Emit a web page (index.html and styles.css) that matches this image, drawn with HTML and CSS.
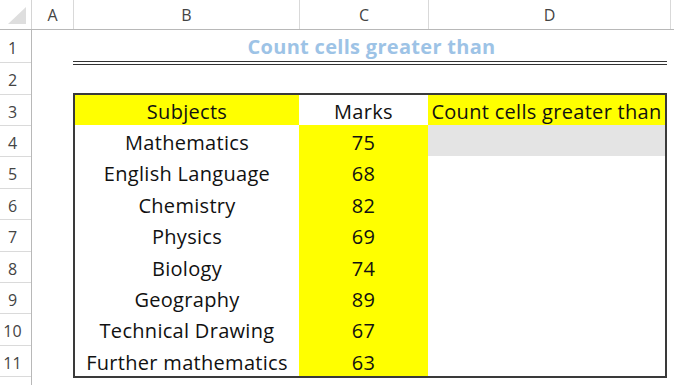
FILE: index.html
```html
<!DOCTYPE html>
<html>
<head>
<meta charset="utf-8">
<link rel="stylesheet" href="styles.css">
</head>
<body>
<div class="sheet">
  <div class="colhdr">
    <div class="corner">
      <svg width="31" height="29" viewBox="0 0 31 29"><polygon points="26,7 26,24 8,24" fill="#dedede"/></svg>
    </div>
    <div class="ch ch-a">A</div>
    <div class="ch ch-b">B</div>
    <div class="ch ch-c">C</div>
    <div class="ch ch-d">D</div>
    <div class="ch ch-e"></div>
  </div>
  <div class="body">
    <div class="rowhdr">
      <div class="rh h33">1</div>
      <div class="rh h32">2</div>
      <div class="rh h31">3</div>
      <div class="rh h31">4</div>
      <div class="rh h32">5</div>
      <div class="rh h31">6</div>
      <div class="rh h32">7</div>
      <div class="rh h31">8</div>
      <div class="rh h31">9</div>
      <div class="rh h32">10</div>
      <div class="rh h31">11</div>
      <div class="rh h31"></div>
    </div>
    <div class="col-a"></div>
    <div class="main">
      <div class="title">Count cells greater than</div>
      <div class="dbl"></div>
      <div class="spacer"></div>
      <div class="table">
        <div class="cell yellow">Subjects</div>
        <div class="cell">Marks</div>
        <div class="cell yellow">Count cells greater than</div>

        <div class="cell">Mathematics</div>
        <div class="cell yellow">75</div>
        <div class="cell gray"></div>

        <div class="cell">English Language</div>
        <div class="cell yellow">68</div>
        <div class="cell"></div>

        <div class="cell">Chemistry</div>
        <div class="cell yellow">82</div>
        <div class="cell"></div>

        <div class="cell">Physics</div>
        <div class="cell yellow">69</div>
        <div class="cell"></div>

        <div class="cell">Biology</div>
        <div class="cell yellow">74</div>
        <div class="cell"></div>

        <div class="cell">Geography</div>
        <div class="cell yellow">89</div>
        <div class="cell"></div>

        <div class="cell">Technical Drawing</div>
        <div class="cell yellow">67</div>
        <div class="cell"></div>

        <div class="cell">Further mathematics</div>
        <div class="cell yellow">63</div>
        <div class="cell"></div>
      </div>
    </div>
  </div>
</div>
</body>
</html>
```

FILE: styles.css
```css
* { box-sizing: border-box; }
html, body {
  margin: 0;
  padding: 0;
  background: #ffffff;
  overflow: hidden;
}
body {
  width: 674px;
  height: 385px;
  font-family: "Open Sans", "Liberation Sans", sans-serif;
  color: #111;
}
.sheet {
  display: flex;
  flex-direction: column;
  width: 674px;
  height: 385px;
}
.colhdr {
  display: flex;
  height: 30px;
  border-bottom: 1px solid #b8b8b8;
  flex: none;
}
.corner {
  width: 32px;
  border-right: 1px solid #d4d4d4;
}
.corner svg { display: block; }
.ch {
  display: flex;
  align-items: center;
  justify-content: center;
  padding-top: 1px;
  font-size: 16px;
  color: #444;
  border-right: 1px solid #d9d9d9;
}
.ch-a { width: 42px; }
.ch-b { width: 226px; }
.ch-c { width: 129px; }
.ch-d { width: 242px; }
.ch-e { flex: 1; border-right: none; }

.body {
  display: flex;
  flex: 1;
  overflow: hidden;
}
.rowhdr {
  width: 32px;
  flex: none;
  display: flex;
  flex-direction: column;
  border-right: 1px solid #b8b8b8;
}
.rh {
  display: flex;
  align-items: center;
  justify-content: center;
  padding-right: 6px;
  padding-top: 3px;
  font-size: 16px;
  color: #444;
  border-bottom: 1px solid #dadada;
  flex: none;
}
.h31 { height: 31px; }
.h32 { height: 32px; }
.h33 { height: 33px; }

.col-a {
  width: 41px;
  flex: none;
}
.main {
  width: 597px;
  flex: none;
  display: flex;
  flex-direction: column;
}
.title {
  height: 31px;
  display: flex;
  align-items: center;
  justify-content: center;
  padding-top: 2px;
  font-weight: 700;
  font-size: 20px;
  color: #9dc3e6;
  letter-spacing: 0.3px;
}
.dbl {
  width: 594px;
  height: 4px;
  border-top: 1px solid #333;
  border-bottom: 1px solid #333;
}
.spacer { height: 28px; }
.table {
  width: 594px;
  height: 285px;
  border: 2px solid #3a3a3a;
  display: grid;
  grid-template-columns: 224px 129px 237px;
  grid-template-rows: 30px 31px 32px 31px 32px 31px 31px 32px 31px;
}
.cell {
  display: flex;
  align-items: center;
  justify-content: center;
  padding-top: 3px;
  font-size: 20px;
  letter-spacing: 0.3px;
  white-space: nowrap;
  color: #111;
}
.yellow { background: #ffff00; }
.gray { background: #e4e4e4; }
```
